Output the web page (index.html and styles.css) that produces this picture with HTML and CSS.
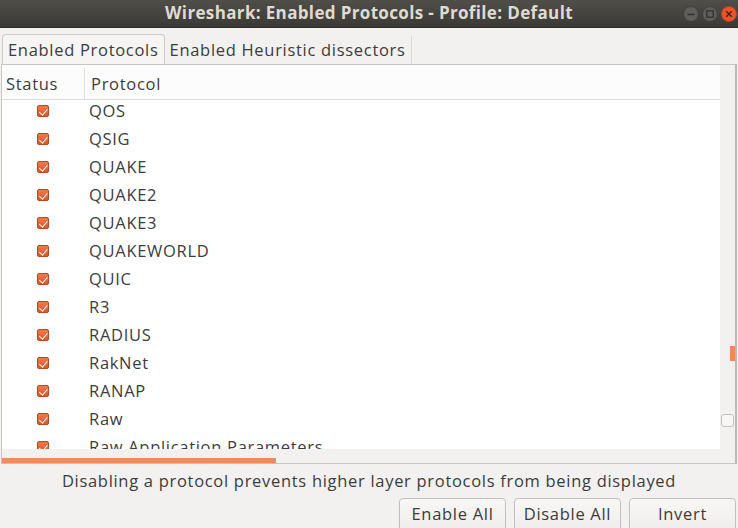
FILE: index.html
```html
<!DOCTYPE html>
<html>
<head>
<meta charset="utf-8">
<link rel="stylesheet" href="styles.css">
</head>
<body>
<div class="window">
  <div class="titlebar">
    <div></div>
    <div class="title">Wireshark: Enabled Protocols - Profile: Default</div>
    <div class="wbtns">
      <span class="wbtn"><svg width="16" height="16" viewBox="0 0 16 16"><circle cx="8" cy="8" r="7.5" fill="#5f5e5a" stroke="#403f3b"/><path d="M4.5 8.5h7" stroke="#2f2e2b" stroke-width="1.4"/></svg></span>
      <span class="wbtn"><svg width="16" height="16" viewBox="0 0 16 16"><circle cx="8" cy="8" r="7.5" fill="#5f5e5a" stroke="#403f3b"/><rect x="4.8" y="4.8" width="6.4" height="6.4" fill="none" stroke="#2f2e2b" stroke-width="1.2"/></svg></span>
      <span class="wbtn"><svg width="16" height="16" viewBox="0 0 16 16"><circle cx="8" cy="8" r="7.5" fill="#e9542a" stroke="#b8421f"/><path d="M5.3 5.3l5.4 5.4M10.7 5.3l-5.4 5.4" stroke="#3a1e12" stroke-width="1.3"/></svg></span>
    </div>
  </div>
  <div class="main">
    <div class="tabs">
      <div class="tab active">Enabled Protocols</div>
      <div class="tab">Enabled Heuristic dissectors</div>
    </div>
    <div class="tree">
      <div class="tree-inner">
        <div class="list">
          <div class="header">
            <div class="hcol status">Status</div>
            <div class="hcol proto">Protocol</div>
          </div>
          <div class="rows">
            <div class="row"><span class="cb"></span><span class="name">QOS</span></div>
            <div class="row"><span class="cb"></span><span class="name">QSIG</span></div>
            <div class="row"><span class="cb"></span><span class="name">QUAKE</span></div>
            <div class="row"><span class="cb"></span><span class="name">QUAKE2</span></div>
            <div class="row"><span class="cb"></span><span class="name">QUAKE3</span></div>
            <div class="row"><span class="cb"></span><span class="name">QUAKEWORLD</span></div>
            <div class="row"><span class="cb"></span><span class="name">QUIC</span></div>
            <div class="row"><span class="cb"></span><span class="name">R3</span></div>
            <div class="row"><span class="cb"></span><span class="name">RADIUS</span></div>
            <div class="row"><span class="cb"></span><span class="name">RakNet</span></div>
            <div class="row"><span class="cb"></span><span class="name">RANAP</span></div>
            <div class="row"><span class="cb"></span><span class="name">Raw</span></div>
            <div class="row"><span class="cb"></span><span class="name">Raw Application Parameters</span></div>
          </div>
        </div>
        <div class="vscroll">
          <div class="vthumb"></div>
          <div class="ebox"></div>
        </div>
      </div>
      <div class="hscroll"><div class="hthumb"></div></div>
    </div>
    <div class="note">Disabling a protocol prevents higher layer protocols from being displayed</div>
    <div class="buttons">
      <button class="btn">Enable All</button>
      <button class="btn">Disable All</button>
      <button class="btn">Invert</button>
    </div>
  </div>
</div>
</body>
</html>
```
FILE: styles.css
```css
html, body {
  margin: 0;
  padding: 0;
}
body {
  width: 738px;
  height: 528px;
  overflow: hidden;
  background: #f2f1f0;
  font-family: "Open Sans", "DejaVu Sans", sans-serif;
  font-size: 16.5px;
  letter-spacing: 0.7px;
  color: #3c3c3c;
}
.window {
  display: flex;
  flex-direction: column;
  height: 528px;
}
.titlebar {
  height: 28px;
  flex: none;
  display: grid;
  grid-template-columns: 1fr auto 1fr;
  align-items: center;
  background: linear-gradient(#4f4e49, #3b3a36);
  border-bottom: 1px solid #2e2d2a;
  box-sizing: border-box;
  letter-spacing: 0;
}
.title {
  color: #dfdbd2;
  font-weight: bold;
  font-size: 17px;
  letter-spacing: 0.35px;
  padding-bottom: 2px;
}
.wbtns {
  display: flex;
  justify-content: flex-end;
  gap: 3px;
  padding-right: 1px;
}
.wbtn {
  display: flex;
  width: 16px;
  height: 16px;
}
.main {
  flex: 1;
  display: flex;
  flex-direction: column;
  padding: 0 1px 0 1px;
  min-height: 0;
}
.tabs {
  display: flex;
  margin-top: 6px;
  height: 31px;
  padding-left: 1px;
}
.tab {
  padding: 0 5px 0 5px;
  line-height: 29px;
  color: #3c3c3c;
  border-right: 1px solid #dcdad6;
  box-sizing: border-box;
}
.tab.active {
  background: #f6f5f4;
  border: 1px solid #cdcbc7;
  border-bottom: none;
  border-radius: 4px 4px 0 0;
}
.tab:not(.active) {
  margin-top: 2px;
  line-height: 28px;
}
.tree {
  height: 400px;
  flex: none;
  border: 1px solid #c9c6c2;
  border-right: 2px solid #bcb9b5;
  display: flex;
  flex-direction: column;
  box-sizing: border-box;
}
.tree-inner {
  flex: 1;
  display: flex;
  min-height: 0;
}
.list {
  flex: 1;
  background: #ffffff;
  overflow: hidden;
  display: flex;
  flex-direction: column;
  height: 384px;
}
.header {
  display: flex;
  height: 35px;
  flex: none;
  background: #fcfcfc;
  border-bottom: 1px solid #dedcd9;
  box-sizing: border-box;
  padding-top: 3px;
}
.hcol {
  line-height: 31px;
  color: #3c3c3c;
}
.hcol.status {
  width: 78px;
  padding-left: 4px;
  border-right: 1px solid #e2e0dd;
}
.hcol.proto {
  padding-left: 6px;
}
.rows {
  display: flex;
  flex-direction: column;
}
.row {
  height: 28px;
  display: flex;
  align-items: flex-start;
  flex: none;
}
.cb {
  width: 12px;
  height: 12px;
  margin: 5px 0 0 35px;
  border-radius: 2px;
  background: linear-gradient(#ed7a4c, #d9582a);
  border: 1px solid #b54a22;
  box-sizing: border-box;
  position: relative;
}
.cb::after {
  content: "";
  position: absolute;
  left: 2.5px;
  top: 0.5px;
  width: 3.5px;
  height: 6.5px;
  border: solid #ffffff;
  border-width: 0 1.8px 1.8px 0;
  transform: rotate(40deg);
}
.name {
  margin-left: 40px;
  margin-top: 1px;
  line-height: 20px;
  color: #3c3c3c;
}
.vscroll {
  width: 15px;
  flex: none;
  background: #f2f1f0;
  position: relative;
}
.vthumb {
  position: absolute;
  left: 10px;
  top: 281px;
  width: 5px;
  height: 15px;
  background: #f08a5d;
}
.ebox {
  position: absolute;
  left: 1px;
  top: 349px;
  width: 11px;
  height: 11px;
  border: 1px solid #c4c1bd;
  border-radius: 3px;
  background: #f7f6f5;
}
.hscroll {
  height: 14px;
  flex: none;
  display: flex;
  align-items: flex-end;
  background: #f2f1f0;
}
.hthumb {
  width: 274px;
  height: 5px;
  background: #ef8a62;
}
.note {
  text-align: center;
  margin-top: 6px;
  line-height: 22px;
  color: #3c3c3c;
}
.buttons {
  display: flex;
  justify-content: flex-end;
  gap: 8px;
  margin-top: 6px;
  padding-right: 1px;
}
.btn {
  width: 107px;
  height: 34px;
  border: 1px solid #c3c0bb;
  border-radius: 4px;
  background: linear-gradient(#f8f7f6, #eeedeb);
  font-family: inherit;
  font-size: 16.5px;
  letter-spacing: 0.7px;
  color: #3c3c3c;
  padding: 0 0 3px 0;
  box-sizing: border-box;
}
```
